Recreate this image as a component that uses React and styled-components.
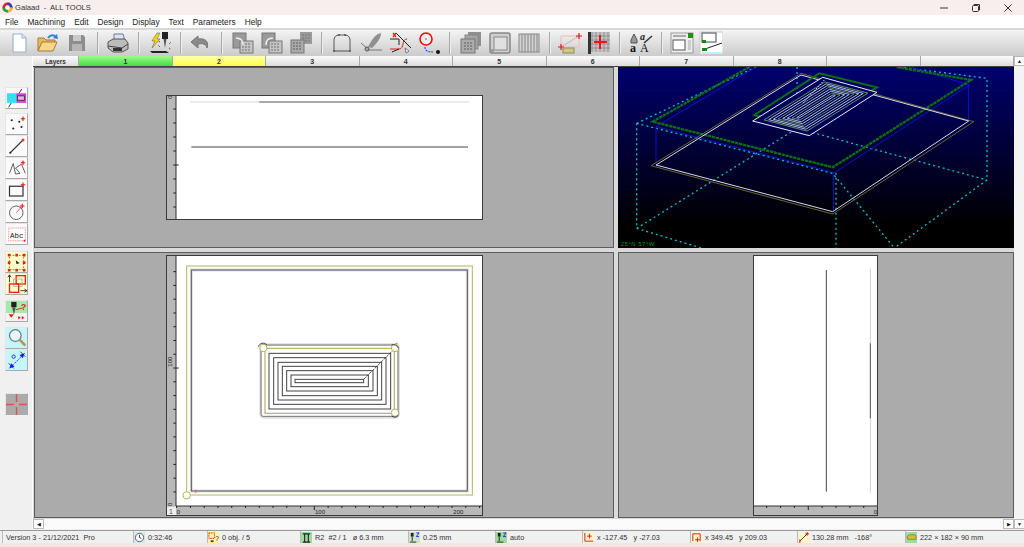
import React from 'react';
import styled, { createGlobalStyle } from 'styled-components';

const Global = createGlobalStyle`
  html, body { margin: 0; padding: 0; width: 1024px; height: 547px; overflow: hidden; background: #f0f0f0; }
  body { font-family: "Liberation Sans", Arial, sans-serif; color: #222; }
  #root { width: 1024px; height: 547px; }
`;

const Window = styled.div`display: flex; flex-direction: column; width: 1024px; height: 547px;`;
const TitleBar = styled.div`display: flex; align-items: center; height: 15px; background: #f9eeee; font-size: 7.6px; color: #333; flex: none;`;
const Logo = styled.svg`width: 11px; height: 11px; margin: 0 2px 0 2px; flex: none;`;
const TitleText = styled.span`white-space: pre;`;
const WinControls = styled.div`display: flex; margin-left: auto;`;
const WinButton = styled.div`display: flex; align-items: center; justify-content: center; width: 32px; height: 15px;`;
const MenuBar = styled.div`display: flex; align-items: center; height: 13px; padding-left: 5px; gap: 9px; background: #fff; font-size: 8.3px; color: #222; flex: none;`;
const Toolbar = styled.div`display: flex; align-items: center; height: 28px; box-sizing: border-box; padding-left: 4px; border-top: 2px solid #d6d6d6; background: linear-gradient(#f4f4f4, #cbcbcb); flex: none;`;
const ToolButton = styled.div`display: flex; align-items: center; justify-content: center; width: 29px; height: 24px; flex: none;`;
const ToolSep = styled.div`width: 12.5px; height: 22px; flex: none; &::after { content: ""; display: block; width: 1px; height: 22px; margin: 0 auto; background: #aaa; box-shadow: 1px 0 #eee; }`;
const Body = styled.div`display: flex; flex: 1; min-height: 0;`;
const Sidebar = styled.div`display: flex; flex-direction: column; width: 33px; padding: 31px 0 0 5px; box-sizing: border-box; background: #f0f0f0; border-right: 1px solid #fff; flex: none;`;
const SideGroup = styled.div`display: flex; flex-direction: column; margin-bottom: ${p => p.$gap}px;`;
const SideButton = styled.div`display: flex; align-items: center; justify-content: center; width: 23px; height: 22px; box-sizing: border-box; background: ${p => p.$bg || '#fafafa'}; border-right: 1px solid #a9a9a9; border-bottom: 1px solid #a9a9a9; border-top: 1px solid #e6e6e6; border-left: 1px solid #e6e6e6;`;
const Workspace = styled.div`display: flex; flex-direction: column; flex: 1; min-width: 0; background: #d9d9d9;`;
const LayerTabs = styled.div`display: flex; height: 11px; box-sizing: border-box; border-bottom: 1px solid #444; flex: none;`;
const LayerTab = styled.div`flex: ${p => p.$w ? `0 0 ${p.$w}px` : '1'}; display: flex; align-items: center; justify-content: center; box-sizing: border-box; border-right: 1px solid #aaa; font-size: ${p => p.$small ? 6.4 : 7}px; font-weight: bold; color: #333; background: ${p => p.$bg || 'linear-gradient(#fbfbfb, #dcdcdc)'};`;
const Panes = styled.div`display: grid; grid-template-columns: 580px 396px; grid-template-rows: 181px 266px; gap: 4px; padding-left: 1px; flex: none;`;
const Pane = styled.div`display: flex; align-items: center; justify-content: center; box-sizing: border-box; background: #ababab; border: 1px solid #5c5c5c;`;
const ViewPane = styled.div`display: flex; background: linear-gradient(#00006e, #000 88%);`;
const Sheet = styled.div`display: flex; background: #fff; outline: 1px solid #3a3a3a; outline-offset: -1px; flex: none; margin: ${p => p.$m || '0'};`;
const HScroll = styled.div`display: flex; height: 10px; margin-top: 1px; background: #f0f0f0; flex: none;`;
const ScrollBtn = styled.div`display: flex; align-items: center; justify-content: center; width: 11px; height: 10px; background: #fff; border: 1px solid #bbb; box-sizing: border-box; font-size: 5px; color: #111; flex: none;`;
const Track = styled.div`flex: 1; background: #fbfbfb;`;
const VScroll = styled.div`display: flex; flex-direction: column; width: 10px; background: #f0f0f0; flex: none;`;
const VTrack = styled.div`flex: 1; background: #f4f4f4;`;
const StatusBar = styled.div`display: flex; height: 13px; margin-top: 1px; padding-left: 2px; box-sizing: border-box; background: #f0f0f0; border-top: 1px solid #9a9a9a; font-size: 7.3px; color: #333; flex: none;`;
const StatusCell = styled.div`display: flex; align-items: center; width: ${p => p.$w}px; white-space: pre; box-sizing: border-box; padding-left: ${p => p.$pad || 0}px; border-left: 1px solid #bbb; flex: none;`;
const StatusIcon = styled.svg`width: 11px; height: 11px; margin-right: 3px; flex: none;`;
const PinkStrip = styled.div`height: 4px; background: #f8e4e0; flex: none;`;

const I = ({ s = 24, children }) => <svg width={s} height={s} viewBox="0 0 24 24">{children}</svg>;

const DotGrid = ({ x, y, c = '#555', n = 3, d = 3 }) => (
  <g fill={c}>
    {Array.from({ length: n * n }).map((_, i) => (
      <circle key={i} cx={x + (i % n) * d} cy={y + Math.floor(i / n) * d} r=".7" />
    ))}
  </g>
);

const NewDoc = () => <I><path d="M6 3h9l4 4v14H6z" fill="#fff" stroke="#9fb0d8" strokeWidth="1.2" /><path d="M15 3v4h4" fill="#dfe6f6" stroke="#9fb0d8" /></I>;
const OpenDoc = () => <I><path d="M2 20V7h6l2 2h9v3" fill="#e8b860" stroke="#a87c30" /><path d="M2 20l4-9h15l-4 9z" fill="#f6d68a" stroke="#a87c30" /><path d="M12 7c3-4 6-3 8-1" fill="none" stroke="#2f80d8" strokeWidth="2" /><path d="M21 3l1 5-5-1z" fill="#2f80d8" /></I>;
const Save = () => <I><path d="M4 4h14l2 2v14H4z" fill="#8d8d8d" /><rect x="8" y="4" width="8" height="6" fill="#c9c9c9" /><rect x="7" y="13" width="10" height="7" fill="#b5b5b5" /></I>;
const Printer = () => <I><path d="M8 3l9 0 2 7H8z" fill="#d8e6f4" stroke="#778" /><path d="M2 11l5-3h12l3 4v6l-6 3H7l-5-4z" fill="#bcbcbc" stroke="#555" /><path d="M2 15l14 2 6-4" fill="none" stroke="#444" /><rect x="7" y="17" width="9" height="3" fill="#333" /></I>;
const Machine = () => <I><rect x="14" y="1" width="6" height="7" fill="#222" /><path d="M15.5 8h3l-1.5 9z" fill="#555" /><path d="M9 2l-5 8h3l-3 7 8-9H9l3-6z" fill="#f5d516" stroke="#555" strokeWidth=".5" /><path d="M2 20h16l3 2H4z" fill="#222" /><g stroke="#444" strokeDasharray="1 1"><path d="M12 16l-2-2M21 13l2-2M21 17l2 1M12 11l-2-1" /></g></I>;
const Undo = () => <I><path d="M9 5L2 11l7 6v-4c5-1 8 0 9 4 2-6-1-10-9-9z" fill="#8a8a8a" stroke="#777" /></I>;
const SheetsA = ({ mirror }) => (
  <I>
    <rect x="2" y="2" width="13" height="15" fill="#9a9a9a" stroke="#777" />
    <rect x="9" y="10" width="13" height="12" fill="#c4c4c4" stroke="#777" />
    <DotGrid x={12} y={13} />
    <path d={mirror ? 'M6 14c0-5 3-7 7-7' : 'M12 14c0-5-3-7-7-7'} fill="none" stroke="#eee" strokeWidth="1.5" />
  </I>
);
const SheetsB = () => <I><rect x="11" y="1" width="12" height="12" fill="#9a9a9a" /><DotGrid x={14} y={4} c="#666" /><rect x="2" y="9" width="13" height="13" fill="#a9a9a9" stroke="#777" /><DotGrid x={5} y={12} c="#444" /></I>;
const Arch = () => <I><path d="M4 20V9c0-3 2-5 5-5h6c3 0 5 2 5 5v11z" fill="none" stroke="#555" /><g fill="#555"><circle cx="4" cy="20" r="1" /><circle cx="20" cy="20" r="1" /><circle cx="9" cy="4" r="1" /><circle cx="15" cy="4" r="1" /></g></I>;
const Blade = () => <I><path d="M22 2c-6 1-10 8-13 14l4 1c4-4 9-9 9-15z" fill="#8f8f8f" /><path d="M2 12l8 7M9 19h14" stroke="#777" strokeWidth="1" /><circle cx="8" cy="18" r="2" fill="#aaa" stroke="#555" /></I>;
const Trim = () => <I><path d="M2 18h9c6 0 2-10 8-10" fill="none" stroke="#e02020" /><path d="M8 2l15 15M2 8h9v6M4 21l7-3" fill="none" stroke="#222" /><path d="M5 2l3 4M8 2l-3 4" stroke="#e02020" strokeWidth="1.3" /><path d="M17 17l4 3-3 2z" fill="#fff" stroke="#777" /></I>;
const Circ = () => <I><circle cx="9" cy="8" r="6" fill="#eee" stroke="#e01010" strokeWidth="1.6" /><circle cx="9" cy="8" r="1" fill="#999" /><path d="M8 16c0 4 3 5 8 5" fill="none" stroke="#2255ee" strokeWidth="1.2" strokeDasharray="2 1" /><circle cx="21" cy="21" r="2" fill="#111" /></I>;
const Stack = () => <I><rect x="9" y="1" width="13" height="14" fill="#8f8f8f" /><rect x="6" y="4" width="13" height="14" fill="#a4a4a4" stroke="#888" /><rect x="2" y="8" width="14" height="14" fill="#ababab" stroke="#777" /><DotGrid x={6} y={12} c="#444" /></I>;
const Frame = () => <I><rect x="2" y="2" width="20" height="20" rx="2" fill="#cfcfcf" stroke="#888" strokeWidth="1.5" /><rect x="6" y="6" width="13" height="13" fill="#e0e0e0" stroke="#888" /><circle cx="4" cy="20" r="2" fill="#999" /></I>;
const Zig = () => <I><rect x="2" y="3" width="20" height="18" fill="#d2d2d2" stroke="#888" /><path d="M5 3v18M8 3v18M11 3v18M14 3v18M17 3v18M20 3v18" stroke="#888" /></I>;
const Measure = () => <I><path d="M3 16L21 5" stroke="#e08080" strokeDasharray="1.5 1" /><path d="M3 5h18v11H3z" fill="none" stroke="#f2b8b8" /><path d="M21 2v6M18 5h6M3 13v6M0 16h6" stroke="#e81818" strokeWidth="1.2" /><rect x="5" y="17" width="11" height="5" fill="#d8c878" stroke="#887" /></I>;
const RulerGrid = () => <I><rect x="2" y="1" width="21" height="20" fill="#c4c4c4" /><path d="M5 1v20M9 1v20M13 1v20M17 1v20M21 1v20M2 5h21M2 9h21M2 13h21M2 17h21" stroke="#777" strokeWidth=".6" /><rect x="1" y="1" width="3" height="22" fill="#333" /><path d="M13 4v14M7 11h13" stroke="#e81818" strokeWidth="2" /></I>;
const Fonts = () => <I><path d="M2 9l3-6 3 6v3H2z" fill="#999" stroke="#555" /><text x="1" y="20.5" fontFamily="Liberation Serif" fontWeight="bold" fontSize="12" fill="#111">a</text><text x="11" y="9" fontFamily="Liberation Serif" fontStyle="italic" fontWeight="bold" fontSize="10" fill="#222">a</text><text x="11" y="20.5" fontFamily="Liberation Serif" fontSize="12" fill="#111">A</text><path d="M15 12l8-7" stroke="#333" strokeWidth="1.5" /></I>;
const Layout1 = () => <I><rect x="1" y="2" width="22" height="20" fill="#eee" stroke="#999" /><rect x="3" y="4" width="13" height="2" fill="#aaa" /><rect x="18" y="2" width="5" height="5" fill="#119911" /><rect x="3" y="9" width="12" height="10" fill="#fff" stroke="#555" /><rect x="18" y="9" width="3" height="10" fill="#ccc" /></I>;
const Layout2 = () => <I><rect x="1" y="1" width="23" height="22" fill="#fff" stroke="#ccc" /><rect x="3" y="2" width="14" height="9" fill="#fff" stroke="#444" /><rect x="3" y="9" width="4" height="3" fill="#118811" /><path d="M6 18l17-6" stroke="#222" /><rect x="3" y="17" width="5" height="3" fill="#118811" /><rect x="3" y="21" width="20" height="2" fill="#bfeef8" /></I>;

const toolGroups = [
  [NewDoc, OpenDoc, Save], [Printer], [Machine], [Undo],
  [SheetsA, () => <SheetsA mirror />, SheetsB],
  [Arch, Blade, Trim, Circ], [Stack, Frame, Zig], [Measure, RulerGrid], [Fonts], [Layout1, Layout2],
];

const S = 18;
const ModeIcon = () => <I s={S + 3}><path d="M18 1l-3 5M6 17l-3 5" stroke="#222" /><rect x="1" y="6" width="13" height="11" fill="#33e0f0" /><rect x="12" y="6" width="11" height="11" fill="#d840d8" /><rect x="13" y="9" width="8" height="5" fill="#e8b0e0" stroke="#333" /></I>;
const Dots = () => <I s={S}><g fill="#222"><circle cx="5" cy="7" r="1.4" /><circle cx="15" cy="9" r="1.4" /><circle cx="7" cy="18" r="1.4" /><circle cx="18" cy="16" r="1.4" /></g><path d="M20 2v6M17 5h6" stroke="#f01010" strokeWidth="1.5" /></I>;
const LineI = () => <I s={S}><path d="M3 21L19 5" stroke="#333" strokeWidth="1.5" /><circle cx="20" cy="4" r="2" fill="#f03030" /><circle cx="3" cy="21" r="1.4" fill="#222" /></I>;
const Poly = () => <I s={S}><path d="M2 19L7 6l3 14 6-1-6-7 8-5 5 12" fill="none" stroke="#333" /><path d="M20 2v6M17 5h6" stroke="#f01010" strokeWidth="1.5" /></I>;
const RectI = () => <I s={S}><rect x="2" y="7" width="18" height="13" fill="none" stroke="#333" strokeWidth="1.6" /><path d="M20 2v6M17 5h6" stroke="#f01010" strokeWidth="1.5" /></I>;
const CircleI = () => <I s={S}><circle cx="11" cy="13" r="9" fill="none" stroke="#333" /><path d="M11 13l7-8" stroke="#f03030" /><path d="M19 1v6M16 4h6" stroke="#f01010" strokeWidth="1.5" /></I>;
const AbcI = () => <svg width={S + 2} height={S} viewBox="0 0 24 24"><rect x="1" y="4" width="22" height="17" fill="#fff" stroke="#f0a0a0" strokeDasharray="2 1" strokeWidth="1.4" /><text x="2.500" y="17" fontFamily="Liberation Mono" fontSize="10" fill="#222">Abc</text><circle cx="22" cy="21" r="1.3" fill="#e01010" /></svg>;
const Select = () => <I s={S + 1}><rect x="3" y="3" width="18" height="18" fill="none" stroke="#e82020" strokeDasharray="2 2" /><g fill="#e82020"><rect x="1" y="1" width="3.4" height="3.4" /><rect x="10.5" y="1" width="3.4" height="3.4" /><rect x="20" y="1" width="3.4" height="3.4" /><rect x="1" y="10.5" width="3.4" height="3.4" /><rect x="20" y="10.5" width="3.4" height="3.4" /><rect x="1" y="20" width="3.4" height="3.4" /><rect x="10.5" y="20" width="3.4" height="3.4" /><rect x="20" y="20" width="3.4" height="3.4" /></g><path d="M11 9l5 4-4 1z" fill="#222" /></I>;
const Move = () => <I s={S + 2}><rect x="11" y="2" width="11" height="10" fill="none" stroke="#e82020" strokeWidth="1.6" /><rect x="8" y="6" width="10" height="9" fill="none" stroke="#aaa" /><rect x="3" y="12" width="11" height="10" fill="none" stroke="#e82020" strokeWidth="1.6" /><path d="M3 1v9M1 4l2-3 2 3M16 20h8M21 18l3 2-3 2" fill="none" stroke="#222" /></I>;
const Tool = () => <I s={S + 3}><rect x="6" y="1" width="6" height="6" fill="#222" /><path d="M7 7h4l-2 9z" fill="#555" /><path d="M11 10l8-2" stroke="#e81818" /><text x="17" y="10" fontFamily="Liberation Sans" fontWeight="bold" fontSize="10" fill="#e81818">?</text><path d="M3 15h6l-3 4z" fill="#e81818" /><path d="M14 17l3 2-3 2zM18 17l3 2-3 2z" fill="#e81818" /></I>;
const Mag = () => <I s={S + 2}><circle cx="10" cy="9" r="7" fill="#e8f8ff" stroke="#778" strokeWidth="1.5" /><path d="M15 14l7 7" stroke="#b89850" strokeWidth="3" /></I>;
const Dist = () => <I s={S + 2}><path d="M3 22L21 4" stroke="#1818d8" strokeDasharray="2 1" /><path d="M2 16l6 6M16 2l6 6" stroke="#222" /><circle cx="8" cy="8" r="2" fill="none" stroke="#1818d8" /><path d="M3 22l2-6 4 4zM21 4l-6 2 4 4z" fill="#1818d8" /></I>;
const Crosshair = () => <I s={23}><rect x="0" y="0" width="24" height="24" fill="#ababab" /><path d="M12 0v9M12 15v9M0 12h9M15 12h9" stroke="#e05050" strokeWidth="1.6" /></I>;

const ticks = (start, step, count, long, horizontal, fixed, len) =>
  Array.from({ length: count }).map((_, i) => {
    const p = start + i * step;
    const l = i === long ? len * 2 : len;
    return horizontal
      ? <line key={i} x1={p} x2={p} y1={fixed} y2={fixed + l} stroke="#222" strokeWidth="3" />
      : <line key={i} y1={p} y2={p} x1={fixed} x2={fixed + l} stroke="#222" strokeWidth="3" />;
  });

const SideView = () => (
  <svg width="317" height="125" viewBox="18 28 951 375">
    <rect x="18" y="28" width="30" height="375" fill="#b8b8b8" />
    <line x1="48" x2="48" y1="28" y2="403" stroke="#333" strokeWidth="3" />
    {ticks(70, 42, 8, 4, false, 40, 8)}
    <text transform="translate(36 34) rotate(-90)" fontSize="18" textAnchor="middle" fill="#222" fontFamily="Liberation Sans">0</text>
    <line x1="90" x2="928" y1="49" y2="49" stroke="#d8d8d8" strokeWidth="3" />
    <line x1="298" x2="720" y1="49" y2="49" stroke="#666" strokeWidth="3" />
    <line x1="94" x2="924" y1="184" y2="184" stroke="#444" strokeWidth="3" />
  </svg>
);

const nest = [[327,692,310,477],[341,678,323,463],[354,665,337,450],[367,652,349,437],[380,639,362,423],[393,625,375,410],[405,611,388,398]];

const TopView = () => (
  <svg width="317" height="261" viewBox="18 15 951 783">
    <rect x="18" y="15" width="30" height="783" fill="#b8b8b8" />
    <rect x="18" y="768" width="951" height="30" fill="#b8b8b8" />
    <line x1="48" x2="48" y1="15" y2="768" stroke="#333" strokeWidth="3" />
    <line x1="48" x2="969" y1="768" y2="768" stroke="#333" strokeWidth="3" />
    {ticks(65, 41.3, 17, 7, false, 40, 8)}
    {ticks(50, 41.3, 23, 10, true, 768, 6)}
    <rect x="20" y="770" width="28" height="27" fill="#eee" />
    <g fontFamily="Liberation Sans" fontSize="18" fill="#222">
      <text x="27" y="792" fill="#555" fontSize="21">1</text>
      <text x="50" y="792">0</text>
      <text x="465" y="792">100</text>
      <text x="880" y="792">200</text>
      <text transform="translate(36 350) rotate(-90)">100</text>
      <text transform="translate(36 768) rotate(-90)">0</text>
    </g>
    <rect x="94" y="60" width="828" height="663" fill="none" stroke="#ddd" strokeWidth="9" />
    <rect x="94" y="60" width="828" height="663" fill="none" stroke="#555" strokeWidth="3" />
    <rect x="80" y="48" width="857" height="687" fill="none" stroke="#b5b45a" strokeWidth="3" />
    <rect x="302" y="284" width="414" height="218" rx="9" fill="none" stroke="#e0e0e0" strokeWidth="8" />
    <rect x="303" y="285" width="411" height="214" rx="6" fill="none" stroke="#777" strokeWidth="3" />
    <rect x="315" y="295" width="388" height="195" fill="none" stroke="#b5b45a" strokeWidth="3.5" />
    {nest.map(([a, b, c, d], i) => (
      <rect key={i} x={a} y={c} width={b - a} height={d - c} fill="none" stroke="#444" strokeWidth="3" />
    ))}
    <line x1="611" y1="388" x2="705" y2="295" stroke="#333" strokeWidth="2.5" strokeDasharray="9 3" />
    <g fill="#fff" stroke="#b5b45a" strokeWidth="3">
      <circle cx="310" cy="294" r="11" />
      <circle cx="705" cy="294" r="11" />
      <circle cx="705" cy="488" r="11" />
      <circle cx="80" cy="736" r="11" />
    </g>
    <path d="M295 290a15 15 0 0 1 25-6M695 285a15 15 0 0 1 20 10M695 498a15 15 0 0 0 20 -2" fill="none" stroke="#222" strokeWidth="2.5" />
    <path d="M705 283l8-4M106 720a4 4 0 1 1 0 8" fill="none" stroke="#f060a0" strokeWidth="3" />
  </svg>
);

const FrontView = () => (
  <svg width="125" height="261" viewBox="39 15 375 783">
    <rect x="39" y="768" width="375" height="30" fill="#b8b8b8" />
    <line x1="39" x2="414" y1="768" y2="768" stroke="#333" strokeWidth="3" />
    {ticks(80, 41.6, 8, 3, true, 768, 6)}
    <text x="401" y="792" fontSize="18" fill="#222" fontFamily="Liberation Sans">0</text>
    <line x1="259" x2="259" y1="60" y2="725" stroke="#444" strokeWidth="3" />
    <line x1="391" x2="391" y1="55" y2="730" stroke="#d4d4d4" strokeWidth="3" />
    <line x1="391" x2="391" y1="280" y2="505" stroke="#555" strokeWidth="3" />
  </svg>
);

const A = [410, 183], B = [580, 227], D = [620, 52];
const q = (u, v) => [A[0] + u * (D[0] - A[0]) + v * (B[0] - A[0]), A[1] + u * (D[1] - A[1]) + v * (B[1] - A[1])];
const quad = (u, v) => [q(u, v), q(1 - u, v), q(1 - u, 1 - v), q(u, 1 - v)].map(p => p.join(',')).join(' ');
const hatch = Array.from({ length: 8 }).map((_, i) => {
  const t = (i + 1) / 8;
  return [0.04 + t * 0.2, 0.07 + t * 0.41];
});

const Perspective = () => (
  <svg width="396" height="181" viewBox="6 21 1188 543">
    <g fill="none" stroke="#10b8c8" strokeWidth="4" strokeDasharray="6 9">
      <path d="M62 190L420 21M62 190L650 340L835 564M850 21L1113 55V360L835 564M62 190V505L255 564M62 505L543 205L1113 360M543 21V205M660 338V564" />
    </g>
    <path d="M420 21L120 200L655 338L1060 75L885 21M120 200V315M652 338V455M1058 75V180" fill="none" stroke="#1414e0" strokeWidth="2.5" />
    <path d="M400 21L110 185L650 322L1065 60L840 21" fill="none" stroke="#0b6e12" strokeWidth="7" strokeDasharray="10 2" />
    <polygon points="105,317 650,462 1073,185 555,40" fill="none" stroke="#6c6430" strokeWidth="3" />
    <polygon points="120,315 650,455 1058,183 555,45" fill="none" stroke="#d8d8e8" strokeWidth="3" />
    <polygon points="415,165 575,208 783,82 610,40" fill="none" stroke="#0b6e12" strokeWidth="6" />
    <polygon points="410,183 580,227 783,97 620,52" fill="#00005a" stroke="#e8e8ff" strokeWidth="3" strokeLinejoin="round" />
    {hatch.map(([u, v], i) => (
      <polygon key={i} points={quad(u, v)} fill="none" stroke={i % 3 === 0 ? '#6ab060' : '#d0e0e0'} strokeWidth="2.5" />
    ))}
    <path d="M625 60L560 130" stroke="#d0e0e0" strokeWidth="3" strokeDasharray="5 3" />
    <text x="14" y="557" fontSize="18" letterSpacing="1.5" fill="#0f9a18" fontFamily="Liberation Sans">25°N  57°W</text>
  </svg>
);

const Clock = () => <StatusIcon viewBox="0 0 12 12"><rect width="12" height="12" fill="#cfe8f0" /><circle cx="6" cy="6" r="4.5" fill="#fff" stroke="#555" /><path d="M6 3v3l2 1" stroke="#333" fill="none" /></StatusIcon>;
const Obj = () => <StatusIcon viewBox="0 0 12 12"><rect width="12" height="12" fill="#fff5a8" /><rect x="1" y="1" width="6" height="6" fill="none" stroke="#e01010" strokeDasharray="1.5 1" /><text x="8" y="10" fontSize="7" fill="#222" fontFamily="Liberation Sans">?</text><rect x="3" y="9" width="3" height="2" fill="#444" /></StatusIcon>;
const ToolS = () => <StatusIcon viewBox="0 0 12 12"><rect width="12" height="12" fill="#9edc9e" /><path d="M2 2h8M4 2v9M8 2v9M2 11h8" stroke="#222" strokeWidth="1.2" /></StatusIcon>;
const Depth = ({ c }) => <StatusIcon viewBox="0 0 12 12"><rect width="12" height="12" fill={c} /><rect x="2" y="1" width="3" height="4" fill="#222" /><path d="M3.5 5v5M1 11h7" stroke="#222" /><path d="M8 1h3l-3 4h3" fill="none" stroke="#2222dd" /></StatusIcon>;
const Pt = ({ mode }) => <StatusIcon viewBox="0 0 12 12"><rect width="12" height="12" fill="#fdf4c8" /><path d={mode === 'a' ? 'M2 1v9h9' : 'M2 10V2h8v8'} fill="none" stroke="#c02020" /><path d={mode === 'a' ? 'M7 2v5M4.5 4.5h5' : 'M7 6v5M4.5 8.500h5'} stroke="#e01010" /></StatusIcon>;
const Len = () => <StatusIcon viewBox="0 0 12 12"><rect width="12" height="12" fill="#fdf4c8" /><path d="M2 10L10 2" stroke="#333" /><path d="M10 0v4M8 2h4M2 8v4" stroke="#e01010" /></StatusIcon>;
const Block = () => <StatusIcon viewBox="0 0 12 12"><rect width="12" height="12" fill="#9edc9e" /><path d="M1 5l3-2h6l1 2v3H2z" fill="#d8c020" stroke="#555" strokeWidth=".6" /></StatusIcon>;

export default function App() {
  return (
    <Window>
      <Global />
      <TitleBar>
        <Logo viewBox="0 0 12 12">
          <circle cx="6" cy="6" r="5.500" fill="#e82020" />
          <path d="M6 6L6 .5A5.500 5.500 0 0 1 11.500 6z" fill="#2040d0" />
          <path d="M6 6L11.500 6A5.500 5.500 0 0 1 6 11.500z" fill="#f0c020" />
          <path d="M6 6L6 11.500A5.500 5.500 0 0 1 .5 6z" fill="#20a040" />
          <circle cx="6" cy="6" r="2.500" fill="#fff" />
        </Logo>
        <TitleText>Galaad  -  ALL TOOLS</TitleText>
        <WinControls>
          <WinButton><svg width="10" height="10" viewBox="0 0 10 10"><path d="M1 5h8" stroke="#333" /></svg></WinButton>
          <WinButton><svg width="10" height="10" viewBox="0 0 10 10"><rect x="1.500" y="2.500" width="6" height="6" rx="1" fill="none" stroke="#333" /><path d="M3 2.500V1.500h5.500V7H7.500" fill="none" stroke="#333" /></svg></WinButton>
          <WinButton><svg width="10" height="10" viewBox="0 0 10 10"><path d="M1.500 1.500l7 7M8.500 1.500l-7 7" stroke="#333" /></svg></WinButton>
        </WinControls>
      </TitleBar>
      <MenuBar>
        {['File', 'Machining', 'Edit', 'Design', 'Display', 'Text', 'Parameters', 'Help'].map(m => <span key={m}>{m}</span>)}
      </MenuBar>
      <Toolbar>
        {toolGroups.map((group, g) => (
          <React.Fragment key={g}>
            {g > 0 && <ToolSep />}
            {group.map((Icon, i) => <ToolButton key={i}><Icon /></ToolButton>)}
          </React.Fragment>
        ))}
      </Toolbar>
      <Body>
        <Sidebar>
          <SideGroup $gap={4}>
            <SideButton><ModeIcon /></SideButton>
          </SideGroup>
          <SideGroup $gap={6}>
            <SideButton><Dots /></SideButton>
            <SideButton><LineI /></SideButton>
            <SideButton><Poly /></SideButton>
            <SideButton><RectI /></SideButton>
            <SideButton><CircleI /></SideButton>
            <SideButton><AbcI /></SideButton>
          </SideGroup>
          <SideGroup $gap={5}>
            <SideButton $bg="#ffffc8"><Select /></SideButton>
            <SideButton $bg="#ffffc8"><Move /></SideButton>
          </SideGroup>
          <SideGroup $gap={5}>
            <SideButton $bg="linear-gradient(#a8e8a8 60%, #f4f4f4 60%)"><Tool /></SideButton>
          </SideGroup>
          <SideGroup $gap={22}>
            <SideButton $bg="#c4f6fa"><Mag /></SideButton>
            <SideButton $bg="#c4f6fa"><Dist /></SideButton>
          </SideGroup>
          <SideGroup $gap={0}>
            <SideButton $bg="#ababab"><Crosshair /></SideButton>
          </SideGroup>
        </Sidebar>
        <Workspace>
          <LayerTabs>
            <LayerTab $w={46} $small>Layers</LayerTab>
            <LayerTab $w={94} $bg="linear-gradient(#a0f890, #40e040)">1</LayerTab>
            <LayerTab $w={93} $bg="linear-gradient(#ffffb0, #ffff40)">2</LayerTab>
            {[3, 4, 5, 6, 7, 8].map(n => <LayerTab key={n}>{n}</LayerTab>)}
            <LayerTab />
            <LayerTab />
          </LayerTabs>
          <Panes>
            <Pane><Sheet $m="0 0 0 1px"><SideView /></Sheet></Pane>
            <ViewPane><Perspective /></ViewPane>
            <Pane><Sheet $m="0 0 0 1px"><TopView /></Sheet></Pane>
            <Pane><Sheet $m="0 1px 0 0"><FrontView /></Sheet></Pane>
          </Panes>
          <HScroll>
            <ScrollBtn>◀</ScrollBtn>
            <Track />
            <ScrollBtn>▶</ScrollBtn>
          </HScroll>
        </Workspace>
        <VScroll>
          <ScrollBtn>▲</ScrollBtn>
          <VTrack />
          <ScrollBtn>▼</ScrollBtn>
        </VScroll>
      </Body>
      <StatusBar>
        <StatusCell $w={131} $pad={3}>Version 3 - 21/12/2021  Pro</StatusCell>
        <StatusCell $w={74}><Clock />0:32:46</StatusCell>
        <StatusCell $w={93}><Obj />0 obj. / 5</StatusCell>
        <StatusCell $w={108}><ToolS />R2  #2 / 1   ø 6.3 mm</StatusCell>
        <StatusCell $w={87}><Depth c="#cfe4cf" />0.25 mm</StatusCell>
        <StatusCell $w={87}><Depth c="#9edc9e" />auto</StatusCell>
        <StatusCell $w={108}><Pt mode="a" />x -127.45   y -27.03</StatusCell>
        <StatusCell $w={107}><Pt mode="b" />x 349.45   y 209.03</StatusCell>
        <StatusCell $w={108}><Len />130.28 mm   -168°</StatusCell>
        <StatusCell $w={119}><Block />222 × 182 × 90 mm</StatusCell>
      </StatusBar>
      <PinkStrip />
    </Window>
  );
}
